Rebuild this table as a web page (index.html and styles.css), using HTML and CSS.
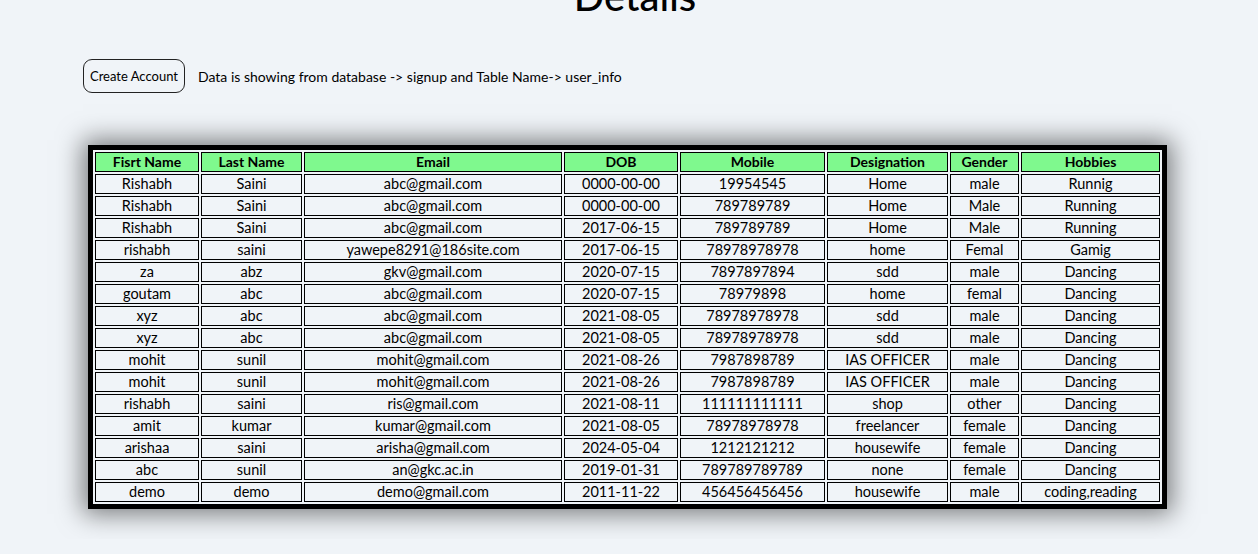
FILE: index.html
```html
<!DOCTYPE html>
<html lang="en">
<head>
<meta charset="utf-8">
<title>Details</title>
<link rel="stylesheet" href="styles.css">
</head>
<body>
<h1 class="title">Details</h1>
<main class="main">
  <div class="toolbar">
    <button class="btn">Create Account</button>
    <span class="info">Data is showing from database -&gt; signup and Table Name-&gt; user_info</span>
  </div>
  <table class="grid">
    <thead>
      <tr>
        <th class="c1">Fisrt Name</th>
        <th class="c2">Last Name</th>
        <th class="c3">Email</th>
        <th class="c4">DOB</th>
        <th class="c5">Mobile</th>
        <th class="c6">Designation</th>
        <th class="c7">Gender</th>
        <th class="c8">Hobbies</th>
      </tr>
    </thead>
    <tbody>
      <tr><td>Rishabh</td><td>Saini</td><td>abc@gmail.com</td><td>0000-00-00</td><td>19954545</td><td>Home</td><td>male</td><td>Runnig</td></tr>
      <tr><td>Rishabh</td><td>Saini</td><td>abc@gmail.com</td><td>0000-00-00</td><td>789789789</td><td>Home</td><td>Male</td><td>Running</td></tr>
      <tr><td>Rishabh</td><td>Saini</td><td>abc@gmail.com</td><td>2017-06-15</td><td>789789789</td><td>Home</td><td>Male</td><td>Running</td></tr>
      <tr><td>rishabh</td><td>saini</td><td>yawepe8291@186site.com</td><td>2017-06-15</td><td>78978978978</td><td>home</td><td>Femal</td><td>Gamig</td></tr>
      <tr><td>za</td><td>abz</td><td>gkv@gmail.com</td><td>2020-07-15</td><td>7897897894</td><td>sdd</td><td>male</td><td>Dancing</td></tr>
      <tr><td>goutam</td><td>abc</td><td>abc@gmail.com</td><td>2020-07-15</td><td>78979898</td><td>home</td><td>femal</td><td>Dancing</td></tr>
      <tr><td>xyz</td><td>abc</td><td>abc@gmail.com</td><td>2021-08-05</td><td>78978978978</td><td>sdd</td><td>male</td><td>Dancing</td></tr>
      <tr><td>xyz</td><td>abc</td><td>abc@gmail.com</td><td>2021-08-05</td><td>78978978978</td><td>sdd</td><td>male</td><td>Dancing</td></tr>
      <tr><td>mohit</td><td>sunil</td><td>mohit@gmail.com</td><td>2021-08-26</td><td>7987898789</td><td>IAS OFFICER</td><td>male</td><td>Dancing</td></tr>
      <tr><td>mohit</td><td>sunil</td><td>mohit@gmail.com</td><td>2021-08-26</td><td>7987898789</td><td>IAS OFFICER</td><td>male</td><td>Dancing</td></tr>
      <tr><td>rishabh</td><td>saini</td><td>ris@gmail.com</td><td>2021-08-11</td><td>111111111111</td><td>shop</td><td>other</td><td>Dancing</td></tr>
      <tr><td>amit</td><td>kumar</td><td>kumar@gmail.com</td><td>2021-08-05</td><td>78978978978</td><td>freelancer</td><td>female</td><td>Dancing</td></tr>
      <tr><td>arishaa</td><td>saini</td><td>arisha@gmail.com</td><td>2024-05-04</td><td>1212121212</td><td>housewife</td><td>female</td><td>Dancing</td></tr>
      <tr><td>abc</td><td>sunil</td><td>an@gkc.ac.in</td><td>2019-01-31</td><td>789789789789</td><td>none</td><td>female</td><td>Dancing</td></tr>
      <tr><td>demo</td><td>demo</td><td>demo@gmail.com</td><td>2011-11-22</td><td>456456456456</td><td>housewife</td><td>male</td><td>coding,reading</td></tr>
    </tbody>
  </table>
</main>
</body>
</html>
```

FILE: styles.css
```css
html, body {
  margin: 0;
  padding: 0;
  background: #f0f4f8;
}
body {
  font-family: Lato, "Noto Sans", sans-serif;
  font-size: 14px;
  color: #000;
}
.title {
  margin: -24px 0 0 12px;
  font-size: 40px;
  line-height: 40px;
  font-weight: 500;
  text-align: center;
}
.main {
  padding: 43px 0 30px 83px;
}
.toolbar {
  display: flex;
  align-items: center;
  gap: 13px;
}
.btn {
  font-family: inherit;
  font-size: 13px;
  line-height: 16px;
  color: #000;
  background: transparent;
  border: 1px solid #222;
  border-radius: 9px;
  padding: 0;
  height: 34px;
  width: 102px;
  white-space: nowrap;
}
.grid {
  margin: 52px 0 0 5px;
  box-sizing: border-box;
  width: 1079px;
  table-layout: fixed;
  border-collapse: separate;
  border-spacing: 2px;
  border: 5px solid #000;
  box-shadow: 0 0 24px 5px rgba(0, 0, 0, 0.5);
}
.grid th,
.grid td {
  box-sizing: border-box;
  border: 1px solid #000;
  padding: 0;
  height: 20px;
  line-height: 18px;
  text-align: center;
  white-space: nowrap;
}
.grid td {
  font-size: 14.5px;
}
.grid th {
  background: #7ff98e;
  font-weight: 700;
}
.c1 { width: 104px; }
.c2 { width: 101px; }
.c3 { width: 258px; }
.c4 { width: 114px; }
.c5 { width: 145px; }
.c6 { width: 121px; }
.c7 { width: 69px; }
.c8 { width: 139px; }
```
